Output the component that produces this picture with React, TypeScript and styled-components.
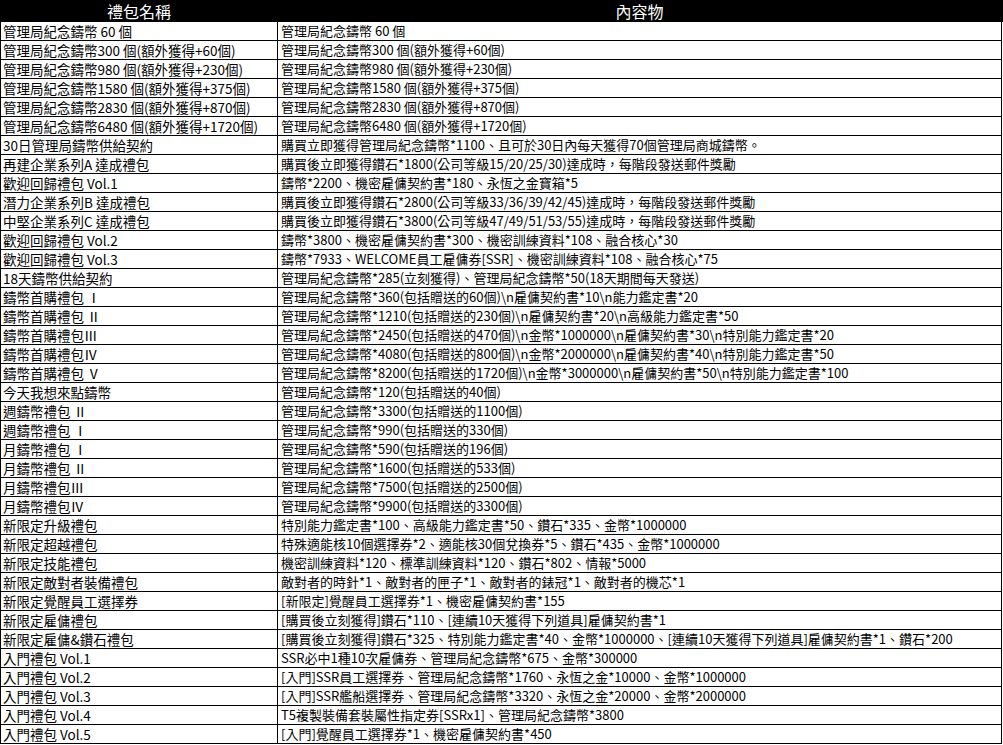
import React from "react";
import styled, { createGlobalStyle } from "styled-components";

const GlobalStyle = createGlobalStyle`
  html, body {
    margin: 0;
    padding: 0;
    background: #ffffff;
  }
  body {
    font-family: "Noto Sans CJK TC", "Noto Sans", sans-serif;
  }
`;

const Table = styled.div`
  width: 1003px;
  display: flex;
  flex-direction: column;
`;

const HeaderRow = styled.div`
  display: grid;
  grid-template-columns: 278px 1fr;
  height: 22px;
  background: #000000;
  color: #ffffff;
  font-size: 16px;
  line-height: 22px;
`;

const HeaderCell = styled.div<{ $shift?: number }>`
  text-align: center;
  padding-right: ${(p) => p.$shift ?? 0}px;
`;

const Row = styled.div`
  display: grid;
  grid-template-columns: 277px 1fr;
  width: 1000px;
  height: 18px;
  border-left: 1px solid #000000;
  border-right: 1px solid #000000;
  border-bottom: 1px solid #000000;
  color: #000000;
  line-height: 18px;
`;

const NameCell = styled.div`
  padding-left: 2px;
  border-right: 1px solid #000000;
  font-size: 13.5px;
  white-space: nowrap;
  overflow: hidden;
`;

const ContentCell = styled.div`
  padding-left: 3px;
  font-size: 13px;
  white-space: nowrap;
  overflow: hidden;
`;

const rows: [string, string][] = [
  ["管理局紀念鑄幣 60 個", "管理局紀念鑄幣 60 個"],
  ["管理局紀念鑄幣300 個(額外獲得+60個)", "管理局紀念鑄幣300 個(額外獲得+60個)"],
  ["管理局紀念鑄幣980 個(額外獲得+230個)", "管理局紀念鑄幣980 個(額外獲得+230個)"],
  ["管理局紀念鑄幣1580 個(額外獲得+375個)", "管理局紀念鑄幣1580 個(額外獲得+375個)"],
  ["管理局紀念鑄幣2830 個(額外獲得+870個)", "管理局紀念鑄幣2830 個(額外獲得+870個)"],
  ["管理局紀念鑄幣6480 個(額外獲得+1720個)", "管理局紀念鑄幣6480 個(額外獲得+1720個)"],
  ["30日管理局鑄幣供給契約", "購買立即獲得管理局紀念鑄幣*1100、且可於30日內每天獲得70個管理局商城鑄幣。"],
  ["再建企業系列A 達成禮包", "購買後立即獲得鑽石*1800(公司等級15/20/25/30)達成時，每階段發送郵件獎勵"],
  ["歡迎回歸禮包 Vol.1", "鑄幣*2200、機密雇傭契約書*180、永恆之金寶箱*5"],
  ["潛力企業系列B 達成禮包", "購買後立即獲得鑽石*2800(公司等級33/36/39/42/45)達成時，每階段發送郵件獎勵"],
  ["中堅企業系列C 達成禮包", "購買後立即獲得鑽石*3800(公司等級47/49/51/53/55)達成時，每階段發送郵件獎勵"],
  ["歡迎回歸禮包 Vol.2", "鑄幣*3800、機密雇傭契約書*300、機密訓練資料*108、融合核心*30"],
  ["歡迎回歸禮包 Vol.3", "鑄幣*7933、WELCOME員工雇傭券[SSR]、機密訓練資料*108、融合核心*75"],
  ["18天鑄幣供給契約", "管理局紀念鑄幣*285(立刻獲得)、管理局紀念鑄幣*50(18天期間每天發送)"],
  ["鑄幣首購禮包 Ⅰ", "管理局紀念鑄幣*360(包括贈送的60個)\\n雇傭契約書*10\\n能力鑑定書*20"],
  ["鑄幣首購禮包 Ⅱ", "管理局紀念鑄幣*1210(包括贈送的230個)\\n雇傭契約書*20\\n高級能力鑑定書*50"],
  ["鑄幣首購禮包Ⅲ", "管理局紀念鑄幣*2450(包括贈送的470個)\\n金幣*1000000\\n雇傭契約書*30\\n特別能力鑑定書*20"],
  ["鑄幣首購禮包Ⅳ", "管理局紀念鑄幣*4080(包括贈送的800個)\\n金幣*2000000\\n雇傭契約書*40\\n特別能力鑑定書*50"],
  ["鑄幣首購禮包 Ⅴ", "管理局紀念鑄幣*8200(包括贈送的1720個)\\n金幣*3000000\\n雇傭契約書*50\\n特別能力鑑定書*100"],
  ["今天我想來點鑄幣", "管理局紀念鑄幣*120(包括贈送的40個)"],
  ["週鑄幣禮包 Ⅱ", "管理局紀念鑄幣*3300(包括贈送的1100個)"],
  ["週鑄幣禮包 Ⅰ", "管理局紀念鑄幣*990(包括贈送的330個)"],
  ["月鑄幣禮包 Ⅰ", "管理局紀念鑄幣*590(包括贈送的196個)"],
  ["月鑄幣禮包 Ⅱ", "管理局紀念鑄幣*1600(包括贈送的533個)"],
  ["月鑄幣禮包Ⅲ", "管理局紀念鑄幣*7500(包括贈送的2500個)"],
  ["月鑄幣禮包Ⅳ", "管理局紀念鑄幣*9900(包括贈送的3300個)"],
  ["新限定升級禮包", "特別能力鑑定書*100、高級能力鑑定書*50、鑽石*335、金幣*1000000"],
  ["新限定超越禮包", "特殊適能核10個選擇券*2、適能核30個兌換券*5、鑽石*435、金幣*1000000"],
  ["新限定技能禮包", "機密訓練資料*120、標準訓練資料*120、鑽石*802、情報*5000"],
  ["新限定敵對者裝備禮包", "敵對者的時針*1、敵對者的匣子*1、敵對者的錶冠*1、敵對者的機芯*1"],
  ["新限定覺醒員工選擇券", "[新限定]覺醒員工選擇券*1、機密雇傭契約書*155"],
  ["新限定雇傭禮包", "[購買後立刻獲得]鑽石*110、[連續10天獲得下列道具]雇傭契約書*1"],
  ["新限定雇傭&鑽石禮包", "[購買後立刻獲得]鑽石*325、特別能力鑑定書*40、金幣*1000000、[連續10天獲得下列道具]雇傭契約書*1、鑽石*200"],
  ["入門禮包 Vol.1", "SSR必中1種10次雇傭券、管理局紀念鑄幣*675、金幣*300000"],
  ["入門禮包 Vol.2", "[入門]SSR員工選擇券、管理局紀念鑄幣*1760、永恆之金*10000、金幣*1000000"],
  ["入門禮包 Vol.3", "[入門]SSR艦船選擇券、管理局紀念鑄幣*3320、永恆之金*20000、金幣*2000000"],
  ["入門禮包 Vol.4", "T5複製裝備套裝屬性指定券[SSRx1]、管理局紀念鑄幣*3800"],
  ["入門禮包 Vol.5", "[入門]覺醒員工選擇券*1、機密雇傭契約書*450"],
];

export default function App() {
  return (
    <>
      <GlobalStyle />
      <Table>
        <HeaderRow>
          <HeaderCell>禮包名稱</HeaderCell>
          <HeaderCell $shift={2}>內容物</HeaderCell>
        </HeaderRow>
        {rows.map(([name, content], i) => (
          <Row key={i}>
            <NameCell>{name}</NameCell>
            <ContentCell>{content}</ContentCell>
          </Row>
        ))}
      </Table>
    </>
  );
}
